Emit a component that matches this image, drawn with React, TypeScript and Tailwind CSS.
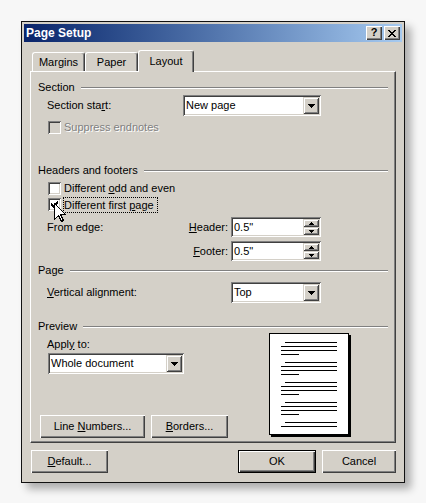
import React from "react";

const SUNKEN =
  "shadow-[inset_1px_1px_0_#808080,inset_-1px_-1px_0_#ffffff,inset_2px_2px_0_#404040,inset_-2px_-2px_0_#d4d0c8]";
const SMALLBTN =
  "bg-[#d4d0c8] shadow-[inset_1px_1px_0_#d4d0c8,inset_-1px_-1px_0_#404040,inset_2px_2px_0_#ffffff,inset_-2px_-2px_0_#808080]";
const PUSHBTN =
  "bg-[#d4d0c8] shadow-[inset_1px_1px_0_#ffffff,inset_-1px_-1px_0_#404040,inset_-2px_-2px_0_#808080]";

function U({ children }: { children: React.ReactNode }) {
  return <span className="underline underline-offset-[1px] decoration-1">{children}</span>;
}

function GroupHeader({ label }: { label: string }) {
  return (
    <div className="h-[13px] flex items-center">
      <span className="whitespace-nowrap">{label}</span>
      <div className="flex-1 ml-[6px] h-[2px] border-t border-t-[#808080] border-b border-b-white" />
    </div>
  );
}

function DownArrow() {
  return (
    <svg width="7" height="4" viewBox="0 0 7 4" shapeRendering="crispEdges">
      <path d="M0 0h7v1H0zM1 1h5v1H1zM2 2h3v1H2zM3 3h1v1H3z" fill="#000" />
    </svg>
  );
}

function SpinArrow({ up }: { up?: boolean }) {
  return (
    <svg width="5" height="3" viewBox="0 0 5 3" shapeRendering="crispEdges">
      {up ? (
        <path d="M2 0h1v1H2zM1 1h3v1H1zM0 2h5v1H0z" fill="#000" />
      ) : (
        <path d="M0 0h5v1H0zM1 1h3v1H1zM2 2h1v1H2z" fill="#000" />
      )}
    </svg>
  );
}

function Combo({ value, className }: { value: string; className: string }) {
  return (
    <div className={`bg-white ${SUNKEN} h-[21px] flex items-stretch p-[2px] ${className}`}>
      <div className="flex-1 pl-[1px] flex items-center whitespace-nowrap">
        <span>{value}</span>
      </div>
      <div className={`${SMALLBTN} w-[16px] flex items-center justify-center`}>
        <DownArrow />
      </div>
    </div>
  );
}

function Spin({ value }: { value: string }) {
  return (
    <div className={`bg-white ${SUNKEN} w-[90px] h-[20px] flex items-stretch p-[2px]`}>
      <div className="flex-1 pl-[1px] flex items-center">
        <span>{value}</span>
      </div>
      <div className="w-[16px] flex flex-col">
        <div className={`${SMALLBTN} h-[8px] flex items-center justify-center`}>
          <SpinArrow up />
        </div>
        <div className={`${SMALLBTN} h-[8px] flex items-center justify-center`}>
          <SpinArrow />
        </div>
      </div>
    </div>
  );
}

function Check({ checked, disabled }: { checked?: boolean; disabled?: boolean }) {
  return (
    <div
      className={`w-[13px] h-[13px] shrink-0 flex items-center justify-center ${SUNKEN} ${
        disabled ? "bg-[#d4d0c8]" : "bg-white"
      }`}
    >
      {checked && (
        <svg width="7" height="7" viewBox="0 0 7 7" shapeRendering="crispEdges">
          <path
            d="M6 0h1v1H6zM5 1h2v1H5zM0 2h1v1H0zM4 2h3v1H4zM0 3h2v1H0zM3 3h3v1H3zM0 4h5v1H0zM1 5h3v1H1zM2 6h1v1H2z"
            fill="#000"
          />
        </svg>
      )}
    </div>
  );
}

function Btn({ children, className }: { children: React.ReactNode; className: string }) {
  return (
    <div className={`${PUSHBTN} h-[23px] flex items-center justify-center whitespace-nowrap ${className}`}>
      <span>{children}</span>
    </div>
  );
}

function PageLines({ count }: { count: number }) {
  const kinds = ["indent", "full", "full", "short"].slice(0, count);
  return (
    <div className="flex flex-col gap-[3px] mb-[7px]">
      {kinds.map((k, i) => (
        <div
          key={i}
          className={
            k === "indent"
              ? "h-[1px] bg-black ml-[4px] w-[52px]"
              : k === "full"
              ? "h-[1px] bg-black w-[56px]"
              : "h-[1px] bg-black w-[18px]"
          }
        />
      ))}
    </div>
  );
}

export default function App() {
  return (
    <div className="relative w-[426px] h-[503px] bg-[#f7f7f7] pt-[21px] pl-[21px] font-['Liberation_Sans',Arial,sans-serif] text-[11px] leading-[13px] text-black">
      <div className="w-[384px] h-[462px] bg-[#d4d0c8] border border-[#111111] p-[2px] shadow-[6px_6px_8px_rgba(0,0,0,0.3)] flex flex-col">
        {/* Title bar */}
        <div className="h-[18px] shrink-0 flex items-center bg-linear-to-r from-[#0a246a] to-[#a6caf0] pl-[2px] pr-[2px]">
          <span className="flex-1 text-white font-bold text-[12px] leading-[14px]">Page Setup</span>
          <div className={`${PUSHBTN} w-[16px] h-[14px] flex items-center justify-center font-bold text-[11px] leading-[11px] pb-[1px]`}>
            ?
          </div>
          <div className={`${PUSHBTN} ml-[2px] w-[16px] h-[14px] flex items-center justify-center`}>
            <svg width="8" height="7" viewBox="0 0 8 7" shapeRendering="crispEdges">
              <path
                d="M0 0h2v1H0zM6 0h2v1H6zM1 1h2v1H1zM5 1h2v1H5zM2 2h4v1H2zM3 3h2v1H3zM2 4h4v1H2zM1 5h2v1H1zM5 5h2v1H5zM0 6h2v1H0zM6 6h2v1H6z"
                fill="#000"
              />
            </svg>
          </div>
        </div>

        {/* Tabs */}
        <div className="mt-[8px] h-[21px] shrink-0 pl-[8px] flex items-end">
          <div className="w-[53px] h-[19px] border-t border-l border-r border-t-white border-l-white border-r-[#404040] rounded-t-[3px] shadow-[inset_-1px_0_0_#808080] flex justify-center pt-[3px]">
            Margins
          </div>
          <div className="w-[53px] h-[19px] border-t border-l border-r border-t-white border-l-white border-r-[#404040] rounded-t-[3px] shadow-[inset_-1px_0_0_#808080] flex justify-center pt-[3px]">
            Paper
          </div>
          <div className="relative z-10 -mb-px w-[56px] h-[22px] bg-[#d4d0c8] border-t border-l border-r border-t-white border-l-white border-r-[#404040] rounded-t-[3px] shadow-[inset_-1px_0_0_#808080] flex justify-center pt-[4px]">
            Layout
          </div>
        </div>

        {/* Panel */}
        <div className="ml-[6px] w-[366px] h-[372px] shrink-0 border border-t-white border-l-white border-r-[#404040] border-b-[#404040] shadow-[inset_-1px_-1px_0_#808080] px-[7px] flex flex-col">
          <div className="mt-[9px]">
            <GroupHeader label="Section" />
          </div>
          <div className="mt-[1px] h-[21px] flex items-center">
            <div className="w-[145px] pl-[9px]">
              Section sta<U>r</U>t:
            </div>
            <Combo value="New page" className="w-[138px]" />
          </div>
          <div className="mt-[5px] h-[13px] flex items-center pl-[10px]">
            <Check disabled />
            <span className="ml-[3px] text-[#808080] [text-shadow:1px_1px_0_#ffffff]">Suppress endnotes</span>
          </div>

          <div className="mt-[30px]">
            <GroupHeader label="Headers and footers" />
          </div>
          <div className="mt-[5px] h-[13px] flex items-center pl-[10px]">
            <Check />
            <span className="ml-[3px]">
              Different <U>o</U>dd and even
            </span>
          </div>
          <div className="mt-[2px] h-[16px] flex items-start pl-[10px]">
            <div className="mt-[1px]">
              <Check checked />
            </div>
            <div className="ml-[2px] h-[16px] border border-dotted border-black pr-[3px] flex items-center">
              <span>
                Different first <U>p</U>age
              </span>
            </div>
          </div>
          <div className="mt-[4px] h-[20px] flex items-center">
            <div className="w-[193px] flex items-center">
              <span className="flex-1 pl-[9px]">From edge:</span>
              <span className="pr-[3px]">
                <U>H</U>eader:
              </span>
            </div>
            <Spin value={'0.5"'} />
          </div>
          <div className="mt-[4px] h-[20px] flex items-center">
            <div className="w-[193px] flex items-center justify-end">
              <span className="pr-[3px]">
                <U>F</U>ooter:
              </span>
            </div>
            <Spin value={'0.5"'} />
          </div>

          <div className="mt-[3px]">
            <GroupHeader label="Page" />
          </div>
          <div className="mt-[5px] h-[21px] flex items-center">
            <div className="w-[193px] pl-[9px]">
              <U>V</U>ertical alignment:
            </div>
            <Combo value="Top" className="w-[90px]" />
          </div>

          <div className="mt-[17px]">
            <GroupHeader label="Preview" />
          </div>
          <div className="flex">
            <div className="w-[231px] flex flex-col">
              <div className="mt-[5px] h-[13px] pl-[9px]">
                Appl<U>y</U> to:
              </div>
              <Combo value="Whole document" className="mt-[2px] ml-[10px] w-[136px]" />
              <div className="mt-[41px] ml-[2px] flex">
                <Btn className="w-[105px]">
                  Line <U>N</U>umbers...
                </Btn>
                <Btn className="ml-[6px] w-[77px]">
                  <U>B</U>orders...
                </Btn>
              </div>
            </div>
            <div className="w-[80px] h-[102px] bg-white border border-black shadow-[2px_2px_0_#000000] pt-[8px] pl-[11px]">
              <PageLines count={4} />
              <PageLines count={4} />
              <PageLines count={4} />
              <PageLines count={4} />
              <PageLines count={2} />
            </div>
          </div>
        </div>

        {/* Bottom buttons */}
        <div className="mt-[7px] flex pl-[7px] pr-[6px]">
          <Btn className="w-[77px]">
            <U>D</U>efault...
          </Btn>
          <div className="flex-1" />
          <div className="w-[78px] h-[23px] border border-black">
            <div className={`${PUSHBTN} h-full flex items-center justify-center`}>
              <span>OK</span>
            </div>
          </div>
          <Btn className="ml-[6px] w-[74px]">Cancel</Btn>
        </div>
      </div>

      {/* Mouse cursor */}
      <svg
        className="absolute left-[54px] top-[203px]"
        width="13"
        height="20"
        viewBox="0 0 13 20"
        shapeRendering="crispEdges"
      >
        <path d="M0.5 0.5 L0.5 16.5 L4.5 12.5 L7.5 18.5 L9.5 17.5 L6.5 11.5 L11.5 11.5 Z" fill="#ffffff" stroke="#000000" strokeWidth="1" />
      </svg>
    </div>
  );
}
